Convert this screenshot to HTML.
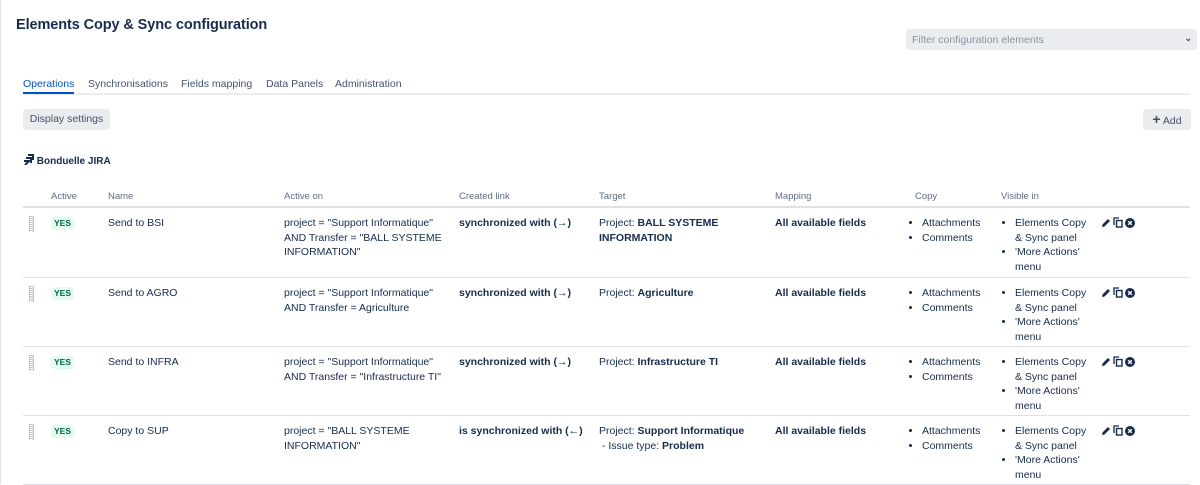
<!DOCTYPE html>
<html><head><style>
body{margin:0;width:1200px;height:484px;overflow:hidden;background:#fff;font-family:"Liberation Sans",sans-serif;color:#172b4d;font-size:10.5px;position:relative}
.lb{position:absolute;left:0;top:0;width:1px;height:484px;background:#dfe1e6}
.a{position:absolute}
h1{position:absolute;left:16px;top:17px;margin:0;font-size:14.5px;font-weight:bold;color:#172b4d;letter-spacing:-0.1px}
.sel{left:906px;top:29px;width:291px;height:21px;background:#ebecf0;border-radius:3px;color:#8993a4;line-height:22px;font-size:10.5px}
.sel span{padding-left:6px}
.tabs{left:23px;top:78px;width:1167px;height:15px;border-bottom:2px solid #ebecf0}
.tab{position:absolute;top:0;font-size:10.5px;color:#42526e}
.btn{background:#ebecf0;border-radius:3px;color:#42526e;font-size:10.5px;text-align:center;line-height:21px;height:21px}
table{position:absolute;left:23px;top:187px;width:1167px;border-collapse:collapse;table-layout:fixed}
th{text-align:left;font-size:9.5px;color:#5e6c84;font-weight:normal;height:15px;padding:4px 0 0 0;border-bottom:2px solid #dfe1e6;vertical-align:top}
td{vertical-align:top;padding:8px 0 0 0;height:60px;border-bottom:1px solid #dfe1e6;line-height:14.5px;font-size:10.5px}
tr.s td{height:59px}
b{font-weight:bold}
ul{margin:0;padding:0 0 0 14px}
.vis{white-space:nowrap}
.yes{display:inline-block;background:#e3fcef;color:#006644;font-size:8.5px;font-weight:bold;padding:0 3px;line-height:13px;border-radius:3px;margin-top:1px}
.drag{display:inline-block;width:5px;height:16px;margin-left:6px;background:repeating-linear-gradient(#c1c7d0 0 1px,#fff 1px 2px);border-left:1px solid #c1c7d0;border-right:1px solid #c1c7d0;box-sizing:border-box}
.ic{white-space:nowrap;padding-top:9px;padding-left:5px}
.ic svg{margin-right:2px}
</style></head><body>
<div class="lb"></div>
<h1>Elements Copy &amp; Sync configuration</h1>
<div class="a sel"><span>Filter configuration elements</span><span style="position:absolute;right:5px;top:-2px;color:#42526e;font-size:9px;font-weight:bold">&#8964;</span></div>
<div class="a tabs">
<span class="tab" style="left:0;color:#0052cc">Operations</span>
<div class="a" style="left:0;top:14px;width:51px;height:2px;background:#0052cc"></div>
<span class="tab" style="left:65px">Synchronisations</span>
<span class="tab" style="left:158px">Fields mapping</span>
<span class="tab" style="left:243px">Data Panels</span>
<span class="tab" style="left:312px">Administration</span>
</div>
<div class="a btn" style="left:23px;top:109px;width:87px">Display settings</div>
<div class="a btn" style="left:1143px;top:109px;width:48px"><b style="font-size:14px;color:#42526e">+</b> Add</div>
<div class="a" style="left:23px;top:154px;font-weight:bold;font-size:10px"><svg width="11" height="11" viewBox="0 0 11 11" style="vertical-align:-1px"><path d="M1 7h5l-4 4M3 4h5v5M5 1h5v5" stroke="#172b4d" stroke-width="2" fill="none"/></svg> Bonduelle JIRA</div>
<table>
<colgroup><col style="width:28px"><col style="width:57px"><col style="width:176px"><col style="width:175px"><col style="width:140px"><col style="width:176px"><col style="width:133px"><col style="width:93px"><col style="width:95px"><col></colgroup>
<tr><th></th><th>Active</th><th>Name</th><th>Active on</th><th>Created link</th><th>Target</th><th>Mapping</th><th style="padding-left:7px">Copy</th><th>Visible in</th><th></th></tr>
<tr><td><span class="drag"></span></td><td><span class="yes">YES</span></td><td>Send to BSI</td><td>project = "Support Informatique"<br>AND Transfer = "BALL SYSTEME<br>INFORMATION"</td><td><b>synchronized with (→)</b></td><td>Project: <b>BALL SYSTEME<br>INFORMATION</b></td><td><b>All available fields</b></td><td><ul><li>Attachments</li><li>Comments</li></ul></td><td class="vis"><ul><li>Elements Copy<br>&amp; Sync panel</li><li>'More Actions'<br>menu</li></ul></td><td class="ic">ICONS</td></tr>
<tr class="s"><td><span class="drag"></span></td><td><span class="yes">YES</span></td><td>Send to AGRO</td><td>project = "Support Informatique"<br>AND Transfer = Agriculture</td><td><b>synchronized with (→)</b></td><td>Project: <b>Agriculture</b></td><td><b>All available fields</b></td><td><ul><li>Attachments</li><li>Comments</li></ul></td><td class="vis"><ul><li>Elements Copy<br>&amp; Sync panel</li><li>'More Actions'<br>menu</li></ul></td><td class="ic">ICONS</td></tr>
<tr class="s"><td><span class="drag"></span></td><td><span class="yes">YES</span></td><td>Send to INFRA</td><td>project = "Support Informatique"<br>AND Transfer = "Infrastructure TI"</td><td><b>synchronized with (→)</b></td><td>Project: <b>Infrastructure TI</b></td><td><b>All available fields</b></td><td><ul><li>Attachments</li><li>Comments</li></ul></td><td class="vis"><ul><li>Elements Copy<br>&amp; Sync panel</li><li>'More Actions'<br>menu</li></ul></td><td class="ic">ICONS</td></tr>
<tr class="s"><td><span class="drag"></span></td><td><span class="yes">YES</span></td><td>Copy to SUP</td><td>project = "BALL SYSTEME<br>INFORMATION"</td><td><b>is synchronized with (←)</b></td><td>Project: <b>Support Informatique</b><br>&nbsp;- Issue type: <b>Problem</b></td><td><b>All available fields</b></td><td><ul><li>Attachments</li><li>Comments</li></ul></td><td class="vis"><ul><li>Elements Copy<br>&amp; Sync panel</li><li>'More Actions'<br>menu</li></ul></td><td class="ic">ICONS</td></tr>
</table>
<script>
var s='<svg width="10" height="10" viewBox="0 0 10 10"><path d="M1 9l.5-2.5L7 1l2 2-5.5 5.5z" fill="#172b4d"/></svg><svg width="10" height="11" viewBox="0 0 10 11"><path d="M1 8V1h5" stroke="#172b4d" stroke-width="1.3" fill="none"/><rect x="3.5" y="3.5" width="5.5" height="6.5" stroke="#172b4d" stroke-width="1.4" fill="none"/></svg><svg width="10" height="10" viewBox="0 0 10 10"><circle cx="5" cy="5" r="5" fill="#172b4d"/><path d="M3.2 3.2l3.6 3.6M6.8 3.2l-3.6 3.6" stroke="#fff" stroke-width="1.4"/></svg>';
document.querySelectorAll('.ic').forEach(function(e){e.innerHTML=s});
</script>
</body></html>
